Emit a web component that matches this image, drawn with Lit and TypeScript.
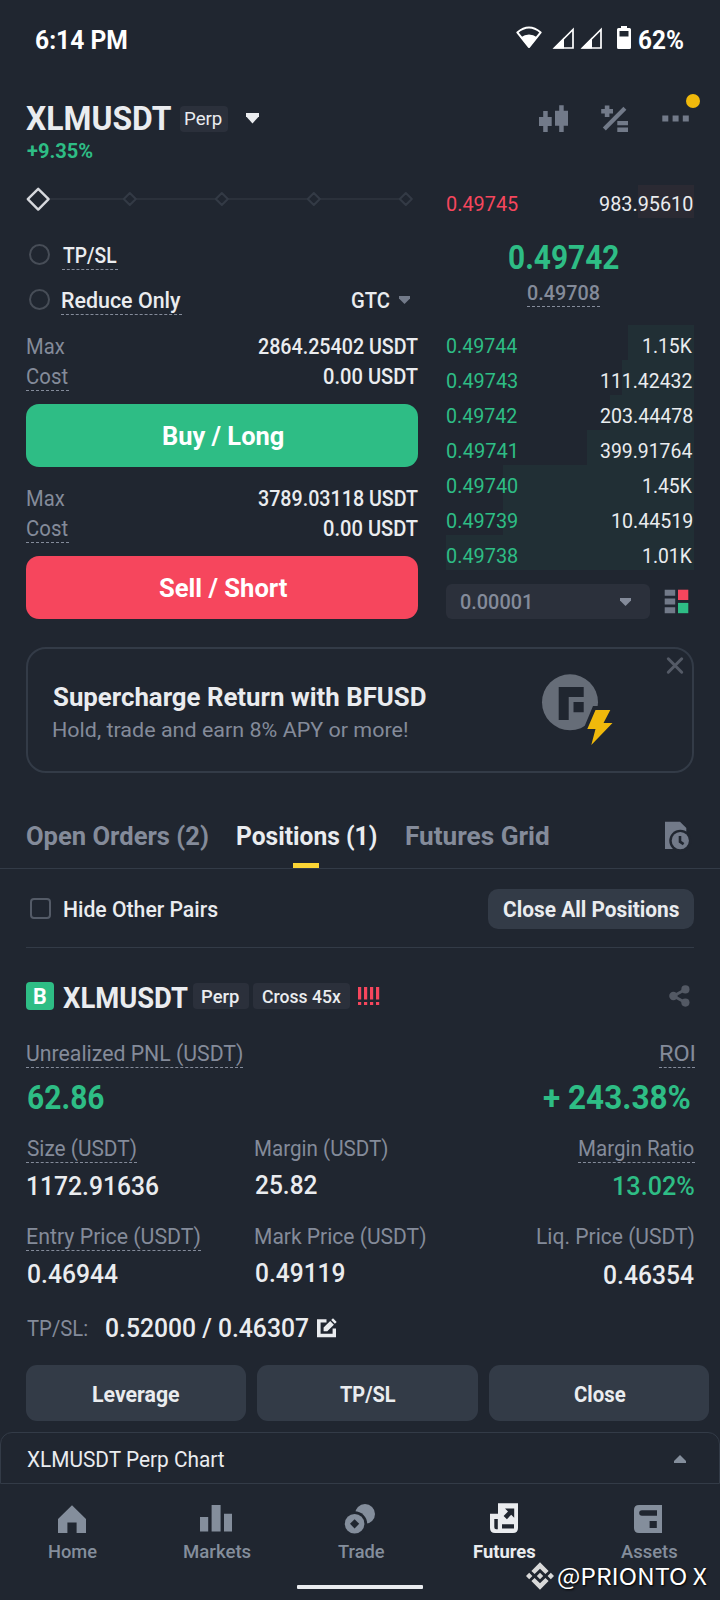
import { LitElement, html, css, svg } from "lit";
import { customElement, property } from "lit/decorators.js";

const BG = "#202630";
const meter = document.createElement("canvas").getContext("2d")!;

/** A single line of text whose glyphs span exactly `w` pixels. */
@customElement("fit-text")
class FitText extends LitElement {
  @property() text = "";
  @property({ type: Number }) w = 0;

  static styles = css`
    :host { display: block; flex: none; white-space: pre; line-height: 1; }
    .run { display: inline-block; transform-origin: 0 0; }
  `;

  render() {
    return html`<span class="run">${this.text}</span>`;
  }

  updated() {
    const cs = getComputedStyle(this);
    meter.font = `${cs.fontWeight} ${cs.fontSize} ${cs.fontFamily}`;
    const m = meter.measureText(this.text);
    const scale = this.w / (m.actualBoundingBoxRight + m.actualBoundingBoxLeft);
    const run = this.renderRoot.querySelector<HTMLElement>(".run")!;
    this.style.width = `${this.w}px`;
    run.style.transform = `translate(${m.actualBoundingBoxLeft * scale}px, 1px) scaleX(${scale})`;
  }
}

const t = (text: string, w: number, cls = "") =>
  html`<fit-text class=${cls} .text=${text} .w=${w}></fit-text>`;

const statusIcons = svg`
  <path d="M529 47 L517.3 32.4 Q529 22.6 540.7 32.4 Z" fill="none" stroke="#fff" stroke-width="2" stroke-linejoin="round"/>
  <path d="M529 47.6 L520.6 37.4 Q529 31.4 537.4 37.4 Z" fill="#fff"/>
  <path d="M554.5 48 L573 29.5 V48 Z M582.5 48 L601 29.5 V48 Z" fill="none" stroke="#fff" stroke-width="1.7"/>
  <path d="M553 48.6 L564 37.5 V48.6 Z M581 48.6 L592 37.5 V48.6 Z" fill="#fff"/>
  <path fill-rule="evenodd" d="M621 26 h6 v2 h2.5 q1.5 0 1.5 1.5 V47.5 q0 1.5 -1.5 1.5 H618.5 q-1.5 0 -1.5 -1.5 V29.5 q0 -1.5 1.5 -1.5 H621 Z M619.5 31 V36.5 H628.5 V31 Z" fill="#fff"/>`;

const headIcons = svg`
  <g fill="#727a89">
    <path d="M543.2 111h4.5v6h4v9h-4v6h-4.5v-6H539v-9h4.2z M559.2 105.3h4.5v5.5h4.3v15h-4.3v6.2h-4.5v-6.2H555v-15h4.2z"/>
    <path d="M604.8 105.5h4.6v3.6h3.6v4.4h-3.6v3.5h-4.6v-3.5h-3.6v-4.4h3.6z M617.3 121h10.7v4.2h-10.7z M617.3 127.5h10.7v4.4h-10.7z"/>
    <path d="M623.4 106.8l3 2.9-20.6 20.8-3-2.9z"/>
    <path d="M662.3 115.5h6v6h-6z M672.6 115.5h6v6h-6z M682.8 115.5h6v6h-6z"/>
  </g>
  <circle cx="693" cy="101" r="7" fill="#f0b90b"/>`;

const bids: [string, string, number, number][] = [
  ["0.49744", "1.15K", 49.5, 66],
  ["0.49743", "111.42432", 91.5, 72],
  ["0.49742", "203.44478", 92.5, 84],
  ["0.49741", "399.91764", 92.5, 107],
  ["0.49740", "1.45K", 49.5, 191],
  ["0.49739", "10.44519", 80.5, 191],
  ["0.49738", "1.01K", 49.5, 248],
];

const navItems = [
  { label: "Home", w: 48, icon: svg`<path d="M18 4.2L32 18V32H22.6V21.6H13.4V32H4V18z"/>` },
  { label: "Markets", w: 66.5, icon: svg`<path d="M2 16h8.2v14.6H2zM13.6 4h9v26.6h-9zM26 12.8h8v17.8h-8z"/>` },
  {
    label: "Trade", w: 46.5,
    icon: svg`<circle cx="23" cy="13" r="10"/><circle cx="12.6" cy="22.8" r="12.6" fill=${BG}/>
      <circle cx="12.6" cy="22.8" r="9.8"/><path d="M12.6 18.2l4.6 4.6-4.6 4.6L8 22.8z" fill=${BG}/>`,
  },
  {
    label: "Futures", w: 61, active: true,
    icon: svg`<path d="M12 2.3H32V27q0 5-5 5H9q-5 0-5-5V12.8h8z"/>
      <path fill=${BG} d="M8.3 18h3.5v10.3h-1.6q-1.9 0-1.9-2zM16 23.2h12v4.3H16zM19 7.6h9.2v9.2l-3-3-4.3 4.4-3.3-3.3 4.4-4.3z"/>`,
  },
  {
    label: "Assets", w: 56,
    icon: svg`<path d="M9 4H32V32H9q-5 0-5-5V9q0-5 5-5z"/>
      <path fill=${BG} d="M12 9.2h15v5.6H12q-2.8 0-2.8-2.8t2.8-2.8zM19.6 20h7.2v7h-7.2z"/>`,
  },
];

@customElement("app-root")
class AppRoot extends LitElement {
  static styles = css`
    :host { display: block; }
    * { box-sizing: border-box; }
    svg { display: block; flex: none; overflow: visible; }
    .page {
      position: relative; display: flex; flex-direction: column; width: 720px; height: 1600px; overflow: hidden;
      background: #202630; color: #eaecef; font-family: Roboto, "Liberation Sans", sans-serif; font-size: 21.5px;
    }
    .row { display: flex; align-items: center; flex: none; }
    .between { justify-content: space-between; }
    .center { justify-content: center; }
    .muted { color: #848b9a; }
    .green { color: #2ebd85; }
    .red { color: #f6465d; }
    .m { font-weight: 500; }
    .b { font-weight: 700; }
    .dot {
      box-sizing: content-box; height: 28px; line-height: 28px; padding: 0 1px; margin: 0 -1px -1px;
      border-bottom: 1px dashed #848b9a;
    }
    .tag { background: #2b303b; border-radius: 4px; height: 26px; font-size: 18.4px; }

    .status { height: 78px; padding: 0 36.5px 0 36px; font-size: 25px; font-weight: 700; color: #fff; }
    .status .row { gap: 3px; }
    .head { height: 41px; margin-top: 20px; padding: 0 18px 0 26px; }
    .pair { font-size: 32.3px; font-weight: 700; }
    .head .tag { width: 48px; margin-left: 8px; }
    .head .caret { margin-left: 18px; }
    .head .tools { margin-left: auto; }
    .change { height: 23px; padding-left: 27px; font-size: 20.5px; font-weight: 700; }

    .trade { display: grid; grid-template-columns: 392px 248px; gap: 28px; padding: 0 26px; flex: none; }
    .slider { margin-top: 25px; }
    .opt { height: 30px; }
    .opt.first { margin-top: 29px; }
    .opt.second { margin-top: 15px; }
    .radio { width: 21px; height: 21px; border: 2px solid #474d57; border-radius: 50%; margin: -2px 13px 0 3px; }
    .second .radio { margin-right: 11.5px; }
    .gtc { margin-left: auto; gap: 9px; padding-right: 8.5px; }
    .info { height: 30px; padding-left: 1px; }
    .info.one { margin-top: 16px; }
    .info.two { margin-top: 16px; }
    .info.one, .info.two { padding-bottom: 1.5px; }
    .order { height: 63px; margin-top: 13px; padding-left: 2px; border-radius: 13px; font-size: 25px; font-weight: 700; color: #fff; }
    .buy { background: #2ebd85; }
    .sell { background: #f6465d; }

    .book { font-size: 21px; }
    .depth {
      height: 35px; padding: 5px 2px 0 1px;
      background-image: linear-gradient(#212f35, #212f35); background-repeat: no-repeat; background-position: right top;
    }
    .ask { height: 33px; margin-top: 23px; padding-top: 4px; background-image: linear-gradient(#2b2a33, #2b2a33); background-size: 56px 100%; }
    .last { height: 34px; margin-top: 22px; padding-left: 62.5px; font-size: 32.3px; font-weight: 700; }
    .mark { height: 28px; margin-top: 4px; padding-left: 82px; font-weight: 500; }
    .bids { margin-top: 19px; }
    .foot { margin-top: 14px; justify-content: space-between; }
    .tick { width: 204px; height: 35px; border-radius: 6px; background: #2b303b; padding: 0 19px 0 15px; color: #848b9a; }
    .foot .layout { margin-right: 5px; }

    .banner { height: 126px; margin: 28px 26px 0; border: 2px solid #333b47; border-radius: 20px; padding: 30px 0 0 24.5px; align-items: flex-start; }
    .copy { display: flex; flex-direction: column; width: 487.5px; }
    .copy .row { height: 36px; font-size: 25.3px; font-weight: 700; }
    .copy .row + .row { height: 30px; margin-top: -1px; font-size: 21px; font-weight: 400; }
    .art { margin-top: -9px; }
    .close { margin: -22px 0 0 52px; }

    .tabs { height: 65px; margin-top: 31px; padding: 0 31px 0 26.5px; border-bottom: 1px solid #333b47; font-size: 25.3px; font-weight: 700; }
    .tabs .tab { position: relative; height: 64px; margin-right: 29px; }
    .tabs .on { color: #eaecef; }
    .tabs .on::after { content: ""; position: absolute; left: 56px; bottom: 0; width: 26px; height: 5px; background: #fcd535; }
    .tabs .on + .tab { margin-left: 1px; }
    .tabs .log { margin-left: auto; }
    .filter { height: 79px; margin: 0 26px; padding-top: 2px; border-bottom: 1px solid #333b47; }
    .box { width: 21px; height: 21px; border: 2px solid #545b67; border-radius: 4px; margin: -1px 13.5px 0 3.5px; }
    .filter .all { margin-left: auto; width: 206px; height: 40px; border-radius: 10px; background: #333b47; font-weight: 700; }

    .pos { display: flex; flex-direction: column; padding: 0 26px; flex: none; }
    .title { height: 28px; margin-top: 34px; }
    .side { width: 28px; height: 28px; border-radius: 4px; background: #2ebd85; color: #fff; font-size: 21.5px; font-weight: 700; margin-right: 9px; }
    .title .name { font-size: 29px; font-weight: 700; margin-top: 2px; }
    .title .tag { margin-left: 4px; padding-top: 1px; }
    .title .perp { width: 56px; margin-left: 4.5px; }
    .title .lev { width: 97px; }
    .title .risk { margin-left: 8px; }
    .title .share { margin: 0 4px 0 auto; }
    .pnl { height: 28px; margin-top: 29px; padding-left: 1px; }
    .big { height: 32px; margin-top: 14px; padding: 0 4px 0 1.5px; font-size: 32.3px; font-weight: 700; }
    .cells { display: grid; grid-template-columns: 228px 1fr auto; height: 28px; align-items: center; padding: 0 .5px 0 1px; }
    .c1 { margin-top: 21px; }
    .c2 { margin-top: 10px; padding-left: 1.5px; font-size: 25.5px; font-weight: 500; }
    .c2 fit-text:nth-child(2) { margin-top: -2px; }
    .c2 .low { margin-top: 2px; }
    .c3 { margin-top: 22px; }
    .tpsl { height: 28px; margin-top: 26px; padding-left: 1px; }
    .tpsl .val { font-size: 25.5px; font-weight: 500; margin: 0 9px 0 18.5px; }
    .acts { display: grid; grid-template-columns: 220px 221px 220px; gap: 11px; margin: 23px 0 0 26px; height: 56px; font-weight: 700; flex: none; }
    .act { border-radius: 11px; background: #333b47; padding: 2px 0 0 1px; }

    .sheet { height: 52px; margin-top: 11px; border: 1px solid #333b47; border-radius: 12px 12px 0 0; padding: 1px 33px 0 25.5px; }
    .nav { display: grid; grid-template-columns: repeat(5, 144px); flex: none; font-size: 18.8px; font-weight: 500; color: #848e9c; }
    .item { display: flex; flex-direction: column; align-items: center; padding-top: 17px; gap: 5px; }
    .item svg { fill: #848e9c; }
    .item .row { height: 19px; padding-left: 1.5px; }
    .active { color: #eaecef; }
    .active svg { fill: #eaecef; }
    .bar { width: 126px; height: 4px; border-radius: 1px; background: #eaecef; margin: 24px auto 0; flex: none; }
    .mark-by { position: absolute; left: 526px; top: 1562px; height: 28px; gap: 4px; color: #fff; font-family: "Noto Sans CJK SC", "Noto Sans", sans-serif; font-size: 23.5px; text-shadow: 1px 1px 2px #000; }
    .mark-by fit-text { margin-top: -2px; }
  `;

  private caret(w: number, h: number, color: string) {
    return html`<svg width=${w} height=${h} viewBox="0 0 13 10" preserveAspectRatio="none"><path d="M0 0H13V3L6.5 10L0 3Z" fill=${color}/></svg>`;
  }

  private info(cls: string, label: string, w: number, value: string, vw: number) {
    return html`<div class="row between info ${cls}">
      ${t(label, w, label === "Cost" ? "dot muted" : "muted")}${t(value, vw, "m")}
    </div>`;
  }

  private get form() {
    return html`<div>
      <svg class="slider" width="392" height="24" viewBox="26 187 392 24" fill="none">
        <path d="M50 199H124M136 199H216M228 199H308M320 199H400" stroke="#2b313b" stroke-width="2"/>
        <path d="M129.8 193l6 6-6 6-6-6zM221.8 193l6 6-6 6-6-6zM313.8 193l6 6-6 6-6-6zM405.8 193l6 6-6 6-6-6z" stroke="#333a45" stroke-width="2" stroke-linejoin="round"/>
        <path d="M38.2 188.8l10.4 10.4-10.4 10.4L27.8 199.2z" stroke="#d6d8dd" stroke-width="2.4" stroke-linejoin="round"/>
      </svg>
      <div class="row opt first"><span class="radio"></span>${t("TP/SL", 54, "dot m")}</div>
      <div class="row opt second">
        <span class="radio"></span>${t("Reduce Only", 119, "dot m")}
        <div class="row gtc">${t("GTC", 38, "m")}${this.caret(11, 8, "#727a89")}</div>
      </div>
      ${this.info("one", "Max", 38, "2864.25402 USDT", 160)}
      ${this.info("", "Cost", 41, "0.00 USDT", 94)}
      <div class="row center order buy">${t("Buy / Long", 120)}</div>
      ${this.info("two", "Max", 38, "3789.03118 USDT", 160)}
      ${this.info("", "Cost", 41, "0.00 USDT", 94)}
      <div class="row center order sell">${t("Sell / Short", 128)}</div>
    </div>`;
  }

  private get book() {
    return html`<div class="book">
      <div class="row between depth ask">${t("0.49745", 70.5, "red")}${t("983.95610", 92.5)}</div>
      <div class="row last green">${t("0.49742", 110)}</div>
      <div class="row mark muted">${t("0.49708", 71, "dot")}</div>
      <div class="bids">
        ${bids.map(([p, q, w, d]) => html`<div class="row between depth" style="background-size:${d}px 100%">
          ${t(p, p.endsWith("1") ? 68.5 : 70.5, "green")}${t(q, w)}
        </div>`)}
      </div>
      <div class="row foot">
        <div class="row between tick">${t("0.00001", 68.5, "m")}${this.caret(11, 8, "#848b9a")}</div>
        <svg class="layout" width="25" height="25" viewBox="0 0 25 25">
          <path d="M.7.7h10.5v6H.7zM.7 9.4h10.5v6H.7zM.7 18.2h10.5v6H.7z" fill="#727a89"/>
          <path d="M14 .7h10.3v10.3H14z" fill="#f6465d"/><path d="M14 13.9h10.3v10.3H14z" fill="#2ebd85"/>
        </svg>
      </div>
    </div>`;
  }

  private get banner() {
    return html`<div class="row banner">
      <div class="copy">
        <div class="row">${t("Supercharge Return with BFUSD", 373)}</div>
        <div class="row muted">${t("Hold, trade and earn 8% APY or more!", 354)}</div>
      </div>
      <svg class="art" width="75" height="80" viewBox="540 670 75 80">
        <circle cx="570" cy="702.3" r="28" fill="#666d78"/>
        <path fill=${BG} d="M558.7 687h25v10h-15v23h-10zM573.5 702h10.2v10.2h-10.2zM593 706h8v18l-18 6z"/>
        <path d="M595.5 710H610.3L603.5 723H612.5L591.3 745L595.5 729H587.3Z" fill="#f0b90b"/>
      </svg>
      <svg class="close" width="16" height="16" viewBox="0 0 16 16"><path d="M1.3 1.8L14.7 15.2M14.7 1.8L1.3 15.2" stroke="#545a66" stroke-width="3" stroke-linecap="round"/></svg>
    </div>`;
  }

  private get tabs() {
    return html`<div class="row tabs muted">
        <div class="row tab">${t("Open Orders (2)", 181)}</div>
        <div class="row tab on">${t("Positions (1)", 139.5)}</div>
        <div class="row tab">${t("Futures Grid", 142.5)}</div>
        <svg class="log" width="24" height="28" viewBox="665 821.5 24 28">
          <path d="M665 821.3H680L686.3 827.5V848.5H665Z" fill="#727a89"/>
          <circle cx="680.3" cy="840.2" r="11" fill=${BG}/>
          <circle cx="680.3" cy="840.2" r="8.6" fill="#727a89"/>
          <path d="M680 835.5V841.2L683.6 843.6" fill="none" stroke=${BG} stroke-width="2.6"/>
        </svg>
      </div>
      <div class="row filter">
        <span class="box"></span>${t("Hide Other Pairs", 154, "m")}
        <div class="row center all">${t("Close All Positions", 176.5)}</div>
      </div>`;
  }

  private get position() {
    return html`<div class="pos">
      <div class="row title">
        <div class="row center side">${t("B", 12)}</div>
        ${t("XLMUSDT", 125, "name")}
        <div class="row center tag perp">${t("Perp", 37, "m")}</div>
        <div class="row center tag lev">${t("Cross 45x", 78.5, "m")}</div>
        <svg class="risk" width="22" height="18" viewBox="0 0 22 18" fill="#f6465d">
          ${[0, 6, 12, 18].map((x) => svg`<path d="M${x} 0h3.2v12.5h-3.2zM${x} 15h3.2v3h-3.2z"/>`)}
        </svg>
        <svg class="share" width="21" height="22" viewBox="0 0 21 22" fill="#535964">
          <path d="M16.2 4.5L4.5 11L16.2 17.5" fill="none" stroke="#535964" stroke-width="2.8"/>
          <circle cx="16.4" cy="4.4" r="4.1"/><circle cx="4.4" cy="11" r="4.2"/><circle cx="16.4" cy="17.6" r="4.1"/>
        </svg>
      </div>
      <div class="row between pnl muted">${t("Unrealized PNL (USDT)", 215, "dot")}${t("ROI", 34, "dot")}</div>
      <div class="row between big green">${t("62.86", 76)}${t("+ 243.38%", 147)}</div>
      <div class="cells c1 muted">${t("Size (USDT)", 108.5, "dot")}${t("Margin (USDT)", 132)}${t("Margin Ratio", 115, "dot")}</div>
      <div class="cells c2">${t("1172.91636", 130.5)}${t("25.82", 61)}${t("13.02%", 80, "green")}</div>
      <div class="cells c3 muted">${t("Entry Price (USDT)", 172.5, "dot")}${t("Mark Price (USDT)", 170)}${t("Liq. Price (USDT)", 156.5)}</div>
      <div class="cells c2">${t("0.46944", 89.5)}${t("0.49119", 89)}${t("0.46354", 89.5, "low")}</div>
      <div class="row tpsl">
        ${t("TP/SL:", 60, "muted")}${t("0.52000 / 0.46307", 202.5, "val")}
        <svg width="20" height="20" viewBox="0 0 20 20" fill="#eaecef">
          <path d="M0 1.2H9.5V4.6H3.6V15.7H15.6V10.6H19V19.3H0Z"/>
          <path d="M6.6 13.3V9.6L13.2 3L16.9 6.7L10.3 13.3ZM14.2 2L16 .2L19.7 3.9L17.9 5.7Z"/>
        </svg>
      </div>
    </div>
    <div class="acts">
      <div class="row center act">${t("Leverage", 87)}</div>
      <div class="row center act">${t("TP/SL", 56)}</div>
      <div class="row center act">${t("Close", 52)}</div>
    </div>`;
  }

  render() {
    return html`<div class="page">
      <div class="row between status">
        ${t("6:14 PM", 91)}
        <div class="row"><svg width="124" height="30" viewBox="512 24 124 30">${statusIcons}</svg>${t("62%", 44.5)}</div>
      </div>
      <div class="row head">
        ${t("XLMUSDT", 145.5, "pair")}
        <div class="row center tag">${t("Perp", 37)}</div>
        <div class="caret">${this.caret(13, 10.5, "#eaecef")}</div>
        <svg class="tools" width="167" height="45" viewBox="535 96 167 45">${headIcons}</svg>
      </div>
      <div class="row change green">${t("+9.35%", 66)}</div>
      <div class="trade">${this.form}${this.book}</div>
      ${this.banner}${this.tabs}${this.position}
      <div class="row between sheet">
        ${t("XLMUSDT Perp Chart", 198)}
        <svg width="12" height="8" viewBox="0 0 12 8"><path d="M6 0L12 6V8H0V6Z" fill="#848e9c"/></svg>
      </div>
      <div class="nav">
        ${navItems.map((n) => html`<div class="item ${n.active ? "active" : ""}">
          <svg width="36" height="36" viewBox="0 0 36 36">${n.icon}</svg>
          <div class="row">${t(n.label, n.w, n.active ? "b" : "")}</div>
        </div>`)}
      </div>
      <div class="bar"></div>
      <div class="row mark-by">
        <svg width="28" height="28" viewBox="0 0 28 28" fill="#d9d9d9">
          <path d="M14 .3L22.6 8.9L19.4 12.1L14 6.7L8.6 12.1L5.4 8.9ZM14 27.7L5.4 19.1L8.6 15.9L14 21.3L19.4 15.9L22.6 19.1ZM3.2 10.8L6.4 14L3.2 17.2L0 14ZM24.8 10.8L28 14L24.8 17.2L21.6 14ZM14 10.8L17.2 14L14 17.2L10.8 14Z"/>
        </svg>
        ${t("@PRIONTO X", 149.5)}
      </div>
    </div>`;
  }
}
